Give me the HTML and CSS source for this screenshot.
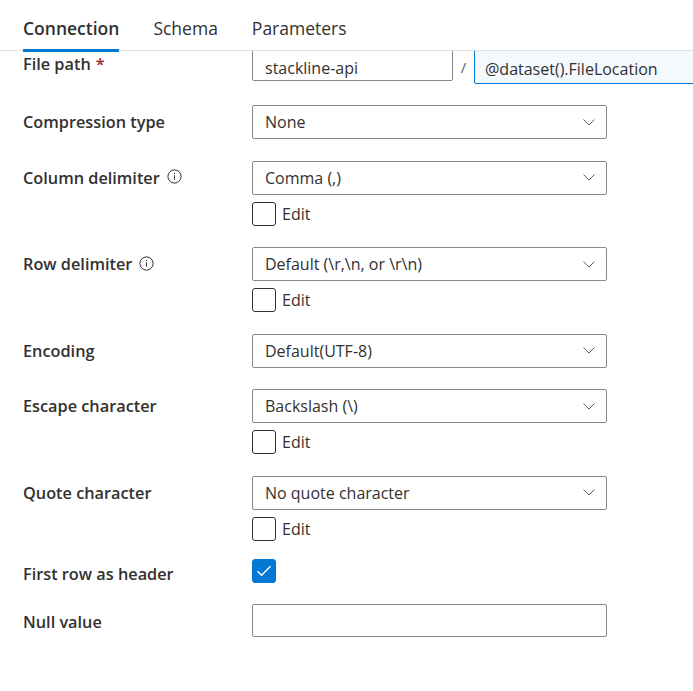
FILE: index.html
```html
<!DOCTYPE html>
<html>
<head>
<meta charset="utf-8">
<link rel="stylesheet" href="styles.css">
</head>
<body>
<div class="page">
  <div class="tabs">
    <div class="tab active">Connection</div>
    <div class="tab">Schema</div>
    <div class="tab">Parameters</div>
  </div>
  <div class="content">
    <div class="form">
      <div class="row">
        <div class="label">File path <span class="req">*</span></div>
        <div class="field path">
          <div class="input short">stackline-api</div>
          <div class="slash">/</div>
          <div class="input focused">@dataset().FileLocation</div>
        </div>
      </div>

      <div class="row">
        <div class="label">Compression type</div>
        <div class="field">
          <div class="select">None<svg class="chev" width="12" height="7" viewBox="0 0 12 7"><path d="M0.5 0.5 L6 6 L11.5 0.5" fill="none" stroke="#605e5c" stroke-width="1"/></svg></div>
        </div>
      </div>

      <div class="row">
        <div class="label">Column delimiter <svg class="info" width="15" height="15" viewBox="0 0 15 15"><circle cx="7.5" cy="7.5" r="6.6" fill="none" stroke="#323130" stroke-width="1"/><rect x="7" y="6.3" width="1" height="4.5" fill="#323130"/><circle cx="7.5" cy="4.5" r="0.7" fill="#323130"/></svg></div>
        <div class="field">
          <div class="select">Comma (,)<svg class="chev" width="12" height="7" viewBox="0 0 12 7"><path d="M0.5 0.5 L6 6 L11.5 0.5" fill="none" stroke="#605e5c" stroke-width="1"/></svg></div>
          <div class="check"><span class="box"></span><span>Edit</span></div>
        </div>
      </div>

      <div class="row">
        <div class="label">Row delimiter <svg class="info" width="15" height="15" viewBox="0 0 15 15"><circle cx="7.5" cy="7.5" r="6.6" fill="none" stroke="#323130" stroke-width="1"/><rect x="7" y="6.3" width="1" height="4.5" fill="#323130"/><circle cx="7.5" cy="4.5" r="0.7" fill="#323130"/></svg></div>
        <div class="field">
          <div class="select">Default (\r,\n, or \r\n)<svg class="chev" width="12" height="7" viewBox="0 0 12 7"><path d="M0.5 0.5 L6 6 L11.5 0.5" fill="none" stroke="#605e5c" stroke-width="1"/></svg></div>
          <div class="check"><span class="box"></span><span>Edit</span></div>
        </div>
      </div>

      <div class="row">
        <div class="label">Encoding</div>
        <div class="field">
          <div class="select">Default(UTF-8)<svg class="chev" width="12" height="7" viewBox="0 0 12 7"><path d="M0.5 0.5 L6 6 L11.5 0.5" fill="none" stroke="#605e5c" stroke-width="1"/></svg></div>
        </div>
      </div>

      <div class="row">
        <div class="label">Escape character</div>
        <div class="field">
          <div class="select">Backslash (\)<svg class="chev" width="12" height="7" viewBox="0 0 12 7"><path d="M0.5 0.5 L6 6 L11.5 0.5" fill="none" stroke="#605e5c" stroke-width="1"/></svg></div>
          <div class="check"><span class="box"></span><span>Edit</span></div>
        </div>
      </div>

      <div class="row">
        <div class="label">Quote character</div>
        <div class="field">
          <div class="select">No quote character<svg class="chev" width="12" height="7" viewBox="0 0 12 7"><path d="M0.5 0.5 L6 6 L11.5 0.5" fill="none" stroke="#605e5c" stroke-width="1"/></svg></div>
          <div class="check"><span class="box"></span><span>Edit</span></div>
        </div>
      </div>

      <div class="row header-row">
        <div class="label short-label">First row as header</div>
        <div class="field">
          <span class="box checked"><svg width="16" height="12" viewBox="0 0 16 12"><path d="M1.5 6.2 L5.6 10.2 L14.5 1.3" fill="none" stroke="#ffffff" stroke-width="1.4"/></svg></span>
        </div>
      </div>

      <div class="row">
        <div class="label null-label">Null value</div>
        <div class="field">
          <div class="input null"></div>
        </div>
      </div>
    </div>
  </div>
</div>
</body>
</html>
```

FILE: styles.css
```css
html, body {
  margin: 0;
  padding: 0;
  background: #ffffff;
}
body {
  font-family: "Open Sans", "Noto Sans", sans-serif;
  color: #323130;
  font-size: 16px;
  overflow: hidden;
  width: 693px;
  height: 691px;
}
.page {
  width: 693px;
  height: 691px;
  overflow: hidden;
  position: relative;
}
.tabs {
  position: relative;
  z-index: 2;
  background: #ffffff;
  display: flex;
  gap: 34px;
  padding-left: 23px;
  height: 50px;
  border-bottom: 1px solid #e1dfdd;
}
.tab {
  position: relative;
  font-size: 17.5px;
  line-height: 22px;
  padding-top: 17px;
  color: #323130;
}
.tab.active {
  font-weight: 600;
}
.tab.active::after {
  content: "";
  position: absolute;
  left: 0;
  right: 0;
  bottom: -2px;
  height: 3px;
  background: #0078d4;
}
.content {
  position: relative;
  z-index: 1;
  height: 640px;
  overflow: hidden;
}
.form {
  margin-top: -4.5px;
  padding-left: 23px;
  display: flex;
  flex-direction: column;
  gap: 21.5px;
}
.row {
  display: flex;
  align-items: flex-start;
}
.label {
  width: 229px;
  flex: none;
  font-weight: 600;
  line-height: 34px;
  font-size: 16.3px;
  display: flex;
  align-items: center;
  white-space: nowrap;
}
.label .info {
  margin-left: 7px;
  margin-top: -2px;
}
.req {
  color: #a4262c;
  margin-left: 5px;
  font-weight: 600;
}
.field {
  display: flex;
  flex-direction: column;
  width: 355px;
}
.field.path {
  flex-direction: row;
  align-items: flex-start;
  width: auto;
}
.input, .select {
  box-sizing: border-box;
  height: 34px;
  border: 1px solid #8a8886;
  border-radius: 2px;
  padding: 0 12px;
  line-height: 32px;
  font-size: 16px;
  white-space: nowrap;
}
.select {
  width: 355px;
  display: flex;
  align-items: center;
  justify-content: space-between;
}
.chev {
  flex: none;
  margin-right: -1px;
}
.input.short {
  width: 201px;
  line-height: 40px;
}
.slash {
  width: 21px;
  height: 34px;
  text-align: center;
  line-height: 40px;
  color: #605e5c;
  font-size: 15px;
}
.input.focused {
  width: 240px;
  height: 37px;
  line-height: 42px;
  padding-left: 10px;
  border-color: #0078d4;
  background: #f3f9fd;
}
.input.null {
  width: 355px;
  height: 33px;
}
.check {
  display: flex;
  align-items: center;
  gap: 6px;
  margin-top: 7px;
  height: 24px;
  font-size: 16px;
}
.box {
  box-sizing: border-box;
  width: 24px;
  height: 24px;
  border: 1px solid #323130;
  border-radius: 3px;
  flex: none;
  display: flex;
  align-items: center;
  justify-content: center;
}
.box.checked {
  background: #0078d4;
  border-color: #0078d4;
}
.header-row {
  margin-top: -3.5px;
}
.short-label {
  line-height: 24px;
  margin-top: 3px;
  margin-bottom: -3px;
}
.null-label {
  line-height: 36px;
}
```
